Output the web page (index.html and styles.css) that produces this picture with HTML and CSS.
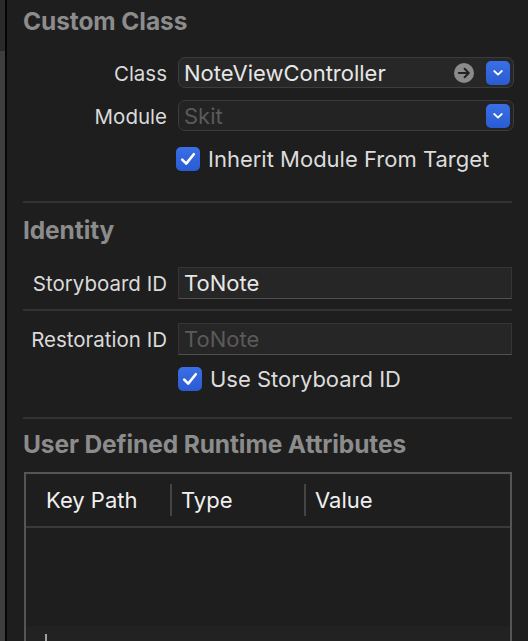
FILE: index.html
```html
<!DOCTYPE html>
<html>
<head>
<meta charset="utf-8">
<link rel="stylesheet" href="styles.css">
</head>
<body>
<div class="window">
  <div class="strip"><div class="strip-top"></div><div class="strip-bottom"></div></div>
  <div class="edge"></div>
  <div class="panel">
    <div class="heading h1">Custom Class</div>

    <div class="row row-class">
      <div class="label">Class</div>
      <div class="popup">
        <span class="value">NoteViewController</span>
        <svg class="goto" width="20" height="20" viewBox="0 0 20 20">
          <circle cx="10" cy="10" r="10" fill="#8b8b8b"/>
          <path d="M4.8 10 H14.6 M10.6 5.8 L14.8 10 L10.6 14.2" fill="none" stroke="#222" stroke-width="2" stroke-linecap="round" stroke-linejoin="round"/>
        </svg>
        <span class="blue-btn"><svg width="10" height="6" viewBox="0 0 10 6"><path d="M1.2 1 L5 4.6 L8.8 1" fill="none" stroke="#fff" stroke-width="1.8" stroke-linecap="round" stroke-linejoin="round"/></svg></span>
      </div>
    </div>

    <div class="row row-module">
      <div class="label">Module</div>
      <div class="popup disabled">
        <span class="value placeholder">Skit</span>
        <span class="blue-btn"><svg width="10" height="6" viewBox="0 0 10 6"><path d="M1.2 1 L5 4.6 L8.8 1" fill="none" stroke="#fff" stroke-width="1.8" stroke-linecap="round" stroke-linejoin="round"/></svg></span>
      </div>
    </div>

    <div class="row row-check1">
      <div></div>
      <div class="check">
        <span class="box"><svg width="24" height="24" viewBox="0 0 24 24"><path d="M6.2 12.6 L10.2 16.6 L17.8 7.2" fill="none" stroke="#fff" stroke-width="2.6" stroke-linecap="round" stroke-linejoin="round"/></svg></span>
        <span class="check-label">Inherit Module From Target</span>
      </div>
    </div>

    <div class="sep sep1"></div>

    <div class="heading h2">Identity</div>

    <div class="row row-sb">
      <div class="label">Storyboard ID</div>
      <div class="field"><span class="value">ToNote</span></div>
    </div>

    <div class="sep sep2"></div>

    <div class="row row-rest">
      <div class="label">Restoration ID</div>
      <div class="field"><span class="value placeholder">ToNote</span></div>
    </div>

    <div class="row row-check2">
      <div></div>
      <div class="check">
        <span class="box"><svg width="24" height="24" viewBox="0 0 24 24"><path d="M6.2 12.6 L10.2 16.6 L17.8 7.2" fill="none" stroke="#fff" stroke-width="2.6" stroke-linecap="round" stroke-linejoin="round"/></svg></span>
        <span class="check-label">Use Storyboard ID</span>
      </div>
    </div>

    <div class="sep sep3"></div>

    <div class="heading h3">User Defined Runtime Attributes</div>

    <div class="table">
      <div class="thead">
        <div class="th th-key">Key Path</div>
        <div class="th th-type">Type</div>
        <div class="th th-value">Value</div>
      </div>
      <div class="tbody"></div>
      <div class="tfoot"><span class="plus"></span></div>
    </div>
  </div>
</div>
</body>
</html>
```

FILE: styles.css
```css
html, body {
  margin: 0;
  padding: 0;
  background: #1e1e1e;
}
body {
  width: 528px;
  height: 641px;
  overflow: hidden;
  font-family: "Inter", "Liberation Sans", sans-serif;
  -webkit-font-smoothing: antialiased;
}
.window {
  display: flex;
  height: 641px;
}
.strip {
  width: 5px;
  display: flex;
  flex-direction: column;
}
.strip-top {
  height: 51px;
  background: #2a2a2a;
}
.strip-bottom {
  flex: 1;
  background: #3e3e3e;
}
.edge {
  width: 2px;
  background: #050505;
}
.panel {
  flex: 1;
  background: #1e1e1e;
  padding: 7px 16px 0 16px;
  display: flex;
  flex-direction: column;
}
.heading {
  font-size: 24.5px;
  font-weight: 700;
  color: #8c8c8c;
  line-height: 28px;
  height: 28px;
  letter-spacing: -0.1px;
  white-space: nowrap;
}
.row {
  display: grid;
  grid-template-columns: 144px 1fr;
  column-gap: 11px;
  align-items: center;
}
.label {
  text-align: right;
  color: #dadada;
  font-size: 20.5px;
  line-height: 24px;
  padding-top: 2px;
  white-space: nowrap;
}
.value {
  font-size: 22px;
  line-height: 24px;
  color: #e6e6e6;
}
.placeholder {
  color: #5a5a5a;
}
.popup {
  height: 29px;
  border: 1px solid #3c3c3c;
  border-radius: 7px;
  background: #272727;
  display: flex;
  align-items: center;
  padding-left: 5px;
  padding-right: 3px;
  margin-right: -2px;
}
.popup .value {
  flex: 1;
}
.popup.disabled {
  background: #232323;
}
.goto {
  margin-right: 12px;
}
.blue-btn {
  width: 24px;
  height: 24px;
  border-radius: 5px;
  background: linear-gradient(#3a6fe6, #2a5bd2);
  display: flex;
  align-items: center;
  justify-content: center;
}
.field {
  height: 30px;
  border: 1px solid #353535;
  border-bottom-color: #505050;
  background: #262626;
  display: flex;
  align-items: center;
  padding-left: 5px;
}
.row-class { margin-top: 22px; }
.row-module { margin-top: 12px; }
.row-check1 { margin-top: 16px; }
.row-check1 .check { margin-left: -2px; }
.check {
  display: flex;
  align-items: center;
  gap: 8px;
  height: 24px;
}
.box {
  width: 24px;
  height: 24px;
  border-radius: 5px;
  background: linear-gradient(#3a6fe6, #2a5bd2);
  display: block;
}
.box svg { display: block; }
.check-label {
  font-size: 22px;
  line-height: 24px;
  color: #dcdcdc;
  white-space: nowrap;
}
.sep {
  height: 2px;
  background: #333333;
}
.sep1 { margin-top: 30px; }
.h2 { margin-top: 13px; }
.row-sb { margin-top: 23px; }
.sep2 { margin-top: 10px; }
.row-rest { margin-top: 12px; }
.row-check2 { margin-top: 12px; }
.sep3 { margin-top: 26px; }
.h3 { margin-top: 11px; }
.table {
  margin-top: 14px;
  margin-left: 1px;
  border: 2px solid #555555;
  border-bottom: none;
  display: flex;
  flex-direction: column;
  flex: 1;
}
.thead {
  height: 52px;
  border-bottom: 2px solid #3a3a3a;
  display: flex;
  align-items: center;
}
.th {
  font-size: 22px;
  line-height: 24px;
  color: #f0f0f0;
  height: 32px;
  display: flex;
  align-items: center;
}
.th-key {
  width: 144px;
  padding-left: 20px;
  box-sizing: border-box;
}
.th-type {
  width: 134px;
  border-left: 2px solid #444444;
  padding-left: 9px;
  box-sizing: border-box;
}
.th-value {
  flex: 1;
  border-left: 2px solid #444444;
  padding-left: 9px;
}
.tbody {
  height: 98px;
}
.tfoot {
  flex: 1;
  background: #222222;
  position: relative;
}
.plus {
  position: absolute;
  left: 19px;
  top: 8px;
  width: 2px;
  height: 10px;
  background: #a0a0a0;
}
```
